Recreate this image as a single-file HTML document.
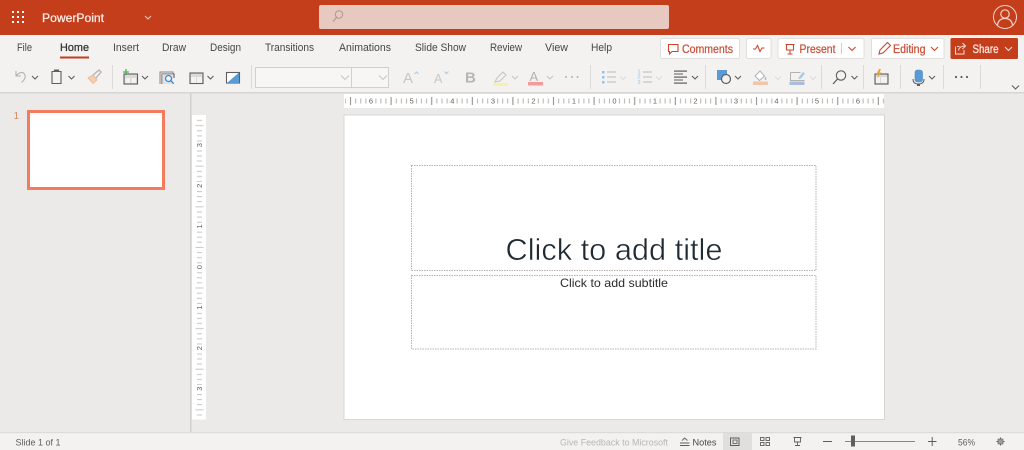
<!DOCTYPE html>
<html><head><meta charset="utf-8"><style>
html,body{margin:0;padding:0;width:1024px;height:450px;overflow:hidden;background:#ebeae9}
svg{display:block;filter:blur(.3px)}
text{font-family:"Liberation Sans",sans-serif}
.t{font-size:11px;fill:#484644}
.i{fill:none;stroke:#605e5c;stroke-width:1}
.d{fill:none;stroke:#c8c6c4;stroke-width:1}
.c{fill:none;stroke:#605e5c;stroke-width:1.1}
.cl{fill:none;stroke:#c8c6c4;stroke-width:1.1}
.r{fill:none;stroke:#d2442a;stroke-width:1.1}
.b{font-size:11.500px;fill:#c8503a;stroke:#c8503a;stroke-width:.25}
</style></head><body>
<svg width="1024" height="450" viewBox="0 0 1024 450" xmlns="http://www.w3.org/2000/svg">
<defs>
<pattern id="hr" x="370.4" y="94" width="40.6" height="14" patternUnits="userSpaceOnUse">
<g fill="#b4b2b0"><rect x="5" y="4.500" width="1" height="5"/><rect x="10" y="4.500" width="1" height="5"/><rect x="15" y="4.500" width="1" height="5"/><rect x="20.2" y="3" width="1" height="8" fill="#8a8886"/><rect x="25.4" y="4.500" width="1" height="5"/><rect x="30.5" y="4.500" width="1" height="5"/><rect x="35.6" y="4.500" width="1" height="5"/></g>
</pattern>
<pattern id="vr" x="192" y="104.9" width="14" height="40.6" patternUnits="userSpaceOnUse">
<g fill="#c8c6c4"><rect x="5" y="5" width="5" height="1"/><rect x="5" y="10" width="5" height="1"/><rect x="5" y="15" width="5" height="1"/><rect x="3.500" y="20.2" width="8" height="1"/><rect x="5" y="25.4" width="5" height="1"/><rect x="5" y="30.5" width="5" height="1"/><rect x="5" y="35.6" width="5" height="1"/></g>
</pattern>
</defs>

<!-- background -->
<rect width="1024" height="450" fill="#ebeae9"/>

<!-- title bar -->
<rect width="1024" height="35" fill="#c43e1c"/>
<g fill="#fff">
<rect x="12" y="11" width="2" height="2"/><rect x="17" y="11" width="2" height="2"/><rect x="22" y="11" width="2" height="2"/>
<rect x="12" y="16" width="2" height="2"/><rect x="17" y="16" width="2" height="2"/><rect x="22" y="16" width="2" height="2"/>
<rect x="12" y="21" width="2" height="2"/><rect x="17" y="21" width="2" height="2"/><rect x="22" y="21" width="2" height="2"/>
</g>
<text x="42" y="22" font-size="11.500" fill="#fbe9e3" stroke="#fbe9e3" stroke-width=".3" textLength="62" lengthAdjust="spacingAndGlyphs">PowerPoint</text>
<path d="M145 16l3 3 3-3" fill="none" stroke="#f2cbbf" stroke-width="1.1"/>
<rect x="319" y="5" width="350" height="24" rx="2" fill="#e8c9bf"/>
<circle cx="339" cy="14.500" r="3.700" fill="none" stroke="#a99a95" stroke-width="1"/>
<path d="M336.500 17.500l-3.500 4" stroke="#a99a95" stroke-width="1.1"/>
<circle cx="1005" cy="17" r="11.500" fill="none" stroke="#f2d5cb" stroke-width="1"/>
<circle cx="1005" cy="14" r="4.200" fill="none" stroke="#f2d5cb" stroke-width="1.200"/>
<path d="M997.500 25c.7-4.500 3.500-6.500 7.500-6.500s6.800 2 7.500 6.500" fill="none" stroke="#f2d5cb" stroke-width="1.200"/>

<!-- ribbon -->
<rect y="35" width="1024" height="58" fill="#f3f2f1"/>
<rect y="92" width="1024" height="1.500" fill="#d8d6d4"/>
<text class="t" x="17" y="51" textLength="15" lengthAdjust="spacingAndGlyphs">File</text>
<text class="t" x="60" y="51" textLength="29" lengthAdjust="spacingAndGlyphs" style="fill:#323130;stroke:#323130;stroke-width:.25">Home</text>
<rect x="60" y="56.500" width="29" height="2" fill="#c43e1c"/>
<text class="t" x="113" y="51" textLength="26" lengthAdjust="spacingAndGlyphs">Insert</text>
<text class="t" x="162" y="51" textLength="24" lengthAdjust="spacingAndGlyphs">Draw</text>
<text class="t" x="210" y="51" textLength="31" lengthAdjust="spacingAndGlyphs">Design</text>
<text class="t" x="265" y="51" textLength="49" lengthAdjust="spacingAndGlyphs">Transitions</text>
<text class="t" x="339" y="51" textLength="52" lengthAdjust="spacingAndGlyphs">Animations</text>
<text class="t" x="415" y="51" textLength="51" lengthAdjust="spacingAndGlyphs">Slide Show</text>
<text class="t" x="490" y="51" textLength="32" lengthAdjust="spacingAndGlyphs">Review</text>
<text class="t" x="545" y="51" textLength="23" lengthAdjust="spacingAndGlyphs">View</text>
<text class="t" x="591" y="51" textLength="21" lengthAdjust="spacingAndGlyphs">Help</text>

<!-- action buttons -->
<g fill="#fff" stroke="#e1dfdd">
<rect x="660.500" y="38.500" width="79" height="20" rx="1.500"/>
<rect x="746.500" y="38.500" width="24.500" height="20" rx="1.500"/>
<rect x="778" y="38.500" width="86" height="20" rx="1.500"/>
<rect x="871.500" y="38.500" width="72.500" height="20" rx="1.500"/>
</g>
<rect x="950.500" y="38" width="67.500" height="21" rx="1.500" fill="#c43e1c"/>
<path class="r" d="M668.500 44.500h9.500v7h-6l-2.500 2.500v-2.500h-1z"/>
<text class="b" x="682" y="53" textLength="51" lengthAdjust="spacingAndGlyphs">Comments</text>
<path class="r" d="M753 49h2.500l2-3.500 2.500 6 2-3.500h2.500"/>
<path class="r" d="M785.500 44.500h9M786.500 44.500v5.500h7v-5.500M790 50v3.500M787.500 54h5"/>
<text class="b" x="799.500" y="53" textLength="36" lengthAdjust="spacingAndGlyphs">Present</text>
<rect x="841" y="43" width="1" height="11" fill="#d2d0ce"/>
<path class="r" d="M848.500 47l3.500 3.500 3.500-3.500"/>
<path class="r" d="M879 54l1-4 7.500-7.500 3 3-7.500 7.500z" stroke-width="1.300"/>
<text class="b" x="893" y="53" textLength="32.500" lengthAdjust="spacingAndGlyphs">Editing</text>
<path class="r" d="M931 47l3.500 3.500 3.500-3.500"/>
<path d="M957 46.500h2.500M964 50v4h-8.500v-7.500M958.500 50.500c.5-3 2.500-4.500 6.500-4.500M962.500 43l3 3-3 3" fill="none" stroke="#f6dcd3" stroke-width="1"/>
<text x="972.500" y="53" font-size="11.500" fill="#fbe6df" stroke="#fbe6df" stroke-width=".3" textLength="26" lengthAdjust="spacingAndGlyphs">Share</text>
<path d="M1005 47l3.500 3.500 3.500-3.500" fill="none" stroke="#f6dcd3" stroke-width="1.100"/>

<!-- toolbar separators -->
<g fill="#dcdad8">
<rect x="112" y="65" width="1" height="24"/>
<rect x="251" y="65" width="1" height="24"/>
<rect x="590" y="65" width="1" height="24"/>
<rect x="705" y="65" width="1" height="24"/>
<rect x="821" y="65" width="1" height="24"/>
<rect x="863" y="65" width="1" height="24"/>
<rect x="900" y="65" width="1" height="24"/>
<rect x="943" y="65" width="1" height="24"/>
<rect x="980" y="65" width="1" height="24"/>
</g>

<!-- undo -->
<path d="M16 71v5h5M16 76c3-3.500 6-4.500 8-2.500 2.500 2.500 1 6-2.500 9" fill="none" stroke="#b4b2b0" stroke-width="1.100"/>
<path class="c" d="M32 76l3 3 3-3"/>
<!-- paste -->
<path d="M52 71.500h2.500v-1.500h4v1.500h2.500v12h-9z" fill="none" stroke="#605e5c" stroke-width="1.100"/>
<rect x="54.500" y="70" width="4" height="2" fill="#605e5c"/>
<path class="c" d="M68.500 76l3 3 3-3"/>
<!-- format painter -->
<path d="M88 78l5-3 4 5-4 3.500z" fill="#f3cfb4" stroke="#e8b48d" stroke-width=".8"/>
<path d="M93 75l6-5 2 2-5 6" fill="none" stroke="#b4b2b0" stroke-width="1.300"/>

<!-- new slide -->
<rect x="124" y="74" width="13.500" height="10" fill="#dcdad8" stroke="#605e5c" stroke-width="1.100"/>
<rect x="125.500" y="78" width="4.500" height="5" fill="#f3f2f1"/><rect x="131.500" y="78" width="4.500" height="5" fill="#f3f2f1"/>
<path d="M126 69v6M123 72h6" stroke="#4caf50" stroke-width="1.300"/>
<path class="c" d="M142 76l3 3 3-3"/>
<!-- find slide -->
<path d="M160 84v-12h13v2" fill="none" stroke="#8a8886" stroke-width="1"/>
<path d="M162 84v-10h12v4" fill="none" stroke="#605e5c" stroke-width="1.100"/>
<rect x="162" y="74" width="11" height="10" fill="#d8d6d4" opacity=".6"/>
<circle cx="168.500" cy="78.500" r="3" fill="#f3f2f1" stroke="#2b88d8" stroke-width="1.200"/>
<path d="M170.700 80.700l3 3" stroke="#2b88d8" stroke-width="1.300"/>
<!-- layout -->
<rect x="190" y="73" width="13" height="10.500" fill="#dcdad8" stroke="#605e5c" stroke-width="1.100"/>
<rect x="191" y="77" width="5" height="6" fill="#f3f2f1"/><rect x="197" y="77" width="5" height="6" fill="#f3f2f1"/>
<path class="c" d="M207.500 76l3 3 3-3"/>
<!-- background -->
<rect x="226.500" y="72.500" width="13" height="10.500" fill="#fff" stroke="#605e5c" stroke-width="1.100"/>
<path d="M227 83l12-10.500v10.500z" fill="#5b9bd5"/>

<!-- font boxes -->
<rect x="255.500" y="67.500" width="96" height="20" fill="#f7f6f5" stroke="#d2d0ce"/>
<path class="cl" d="M341 75.500l4 4 4-4"/>
<rect x="351.500" y="67.500" width="37" height="20" fill="#f7f6f5" stroke="#d2d0ce"/>
<path class="cl" d="M379 75.500l4 4 4-4"/>

<!-- font size -->
<text x="403" y="83" font-size="15" fill="#c8c6c4">A</text>
<path d="M414.500 74l2-2 2 2" fill="none" stroke="#a6cbe8"/>
<text x="434" y="83" font-size="12.500" fill="#c8c6c4">A</text>
<path d="M444.500 71.500l2 2 2-2" fill="none" stroke="#a6cbe8"/>
<text x="465" y="82.500" font-size="15" font-weight="bold" fill="#b8b6b4">B</text>
<!-- highlight -->
<path d="M495 82l2-4 6-6 3 3-6 6z" fill="none" stroke="#c8c6c4" stroke-width="1.100"/>
<rect x="493" y="83" width="15" height="3" fill="#f7f3a0"/>
<path class="cl" d="M512 76l3 3 3-3"/>
<!-- font colour -->
<text x="529.500" y="81" font-size="13" fill="#b4b2b0">A</text>
<rect x="528" y="82" width="15" height="3.500" fill="#f59a9a"/>
<path class="cl" d="M547 76l3 3 3-3"/>
<g fill="#b4b2b0"><circle cx="566" cy="77" r="1"/><circle cx="572" cy="77" r="1"/><circle cx="577.500" cy="77" r="1"/></g>

<!-- bullets -->
<g fill="#90c4ec"><rect x="602" y="71" width="2.500" height="2.500"/><rect x="602" y="76" width="2.500" height="2.500"/><rect x="602" y="81" width="2.500" height="2.500"/></g>
<g fill="#bdbbb9"><rect x="607" y="71.500" width="9" height="1"/><rect x="607" y="76.500" width="9" height="1"/><rect x="607" y="81.500" width="9" height="1"/></g>
<path d="M620 76.500l3 3 3-3" fill="none" stroke="#dcdad8"/>
<text x="637.500" y="73.500" font-size="5.500" fill="#90c4ec">1</text><text x="637.500" y="78.500" font-size="5.500" fill="#90c4ec">2</text><text x="637.500" y="84" font-size="5.500" fill="#90c4ec">3</text>
<g fill="#bdbbb9"><rect x="643" y="71.500" width="9" height="1"/><rect x="643" y="76.500" width="9" height="1"/><rect x="643" y="81.500" width="9" height="1"/></g>
<path d="M656 76.500l3 3 3-3" fill="none" stroke="#dcdad8"/>
<!-- align -->
<g fill="#605e5c"><rect x="674" y="70.500" width="13" height="1.200"/><rect x="674" y="73.500" width="9" height="1"/><rect x="674" y="76.500" width="13" height="1.200"/><rect x="674" y="79.500" width="9" height="1"/><rect x="674" y="82.500" width="13" height="1.200"/></g>
<path class="c" d="M692 76l3 3 3-3"/>

<!-- shapes -->
<rect x="717" y="70" width="10" height="10" fill="#5b9bd5"/>
<circle cx="726" cy="79" r="4.500" fill="#f3f2f1" stroke="#605e5c" stroke-width="1.200"/>
<path class="c" d="M735 76l3 3 3-3"/>
<!-- fill -->
<path d="M755 76l5-5 4.500 5-5 4.500z" fill="#fff" stroke="#b4b2b0"/>
<path d="M765.500 77v3" stroke="#90c4ec" stroke-width="1.500"/>
<rect x="753" y="81.500" width="15" height="3.500" fill="#f2c4a8"/>
<path d="M775 76.500l3 3 3-3" fill="none" stroke="#dcdad8"/>
<!-- outline -->
<path d="M790.500 72.500h10M790.500 72.500v8h14" fill="none" stroke="#b4b2b0"/>
<path d="M798 79l1-2 4-5 2 1.500-4 5z" fill="#a6cbe8"/>
<rect x="789.500" y="81.500" width="15" height="3.500" fill="#a9bde0"/>
<path d="M810 76.500l3 3 3-3" fill="none" stroke="#dcdad8"/>

<!-- find -->
<circle cx="841" cy="75.500" r="4.700" fill="none" stroke="#605e5c" stroke-width="1.100"/>
<path d="M837.500 79l-4.500 5" stroke="#605e5c" stroke-width="1.300"/>
<path class="c" d="M851.500 76l3 3 3-3"/>
<!-- designer -->
<rect x="875" y="74" width="13" height="10" fill="#dcdad8" stroke="#605e5c" stroke-width="1.100"/>
<rect x="881" y="77" width="6" height="6" fill="#f3f2f1"/><rect x="876" y="77" width="4" height="6" fill="#f3f2f1"/>
<path d="M879 69l-2.500 5h2l-1.500 4.500 4.500-6h-2l1.500-3.500z" fill="#f0a030"/>
<!-- dictate -->
<rect x="915" y="70" width="7.500" height="12" rx="2.500" fill="#5b9bd5" stroke="#4a89c5" stroke-width=".6"/>
<path d="M913 79c0 3.500 2 5 5.500 5s5.500-1.500 5.500-5" fill="none" stroke="#605e5c"/>
<rect x="917" y="83.500" width="3" height="2.500" fill="#605e5c"/>
<path class="c" d="M929 76l3 3 3-3"/>
<g fill="#605e5c"><circle cx="956" cy="77" r="1.100"/><circle cx="961.500" cy="77" r="1.100"/><circle cx="967" cy="77" r="1.100"/></g>
<path class="c" d="M1012 85.500l3.500 3.500 3.500-3.500"/>

<!-- left pane -->
<rect x="190" y="93" width="1.500" height="339" fill="#d2d0ce"/>
<text x="13.500" y="119" font-size="10" fill="#d08a5e">1</text>
<rect x="28.500" y="111.500" width="135" height="77" fill="#fff" stroke="#f47b5e" stroke-width="3"/>

<!-- horizontal ruler -->
<rect x="344" y="94" width="540" height="14" fill="#fff"/>
<rect x="345" y="94" width="539" height="14" fill="url(#hr)"/>
<g fill="#fff"><rect x="367" y="97" width="7" height="8"/><rect x="408" y="97" width="7" height="8"/><rect x="449" y="97" width="7" height="8"/><rect x="489" y="97" width="7" height="8"/><rect x="530" y="97" width="7" height="8"/><rect x="570" y="97" width="7" height="8"/><rect x="611" y="97" width="7" height="8"/><rect x="651" y="97" width="7" height="8"/><rect x="692" y="97" width="7" height="8"/><rect x="733" y="97" width="7" height="8"/><rect x="773" y="97" width="7" height="8"/><rect x="814" y="97" width="7" height="8"/><rect x="855" y="97" width="7" height="8"/></g>
<g font-size="7.500" fill="#605e5c" text-anchor="middle">
<text x="371" y="103.500">6</text><text x="411.700" y="103.500">5</text><text x="452.300" y="103.500">4</text><text x="492.900" y="103.500">3</text><text x="533.500" y="103.500">2</text><text x="574" y="103.500">1</text><text x="614.500" y="103.500">0</text><text x="655" y="103.500">1</text><text x="695.500" y="103.500">2</text><text x="736" y="103.500">3</text><text x="776.500" y="103.500">4</text><text x="817" y="103.500">5</text><text x="858" y="103.500">6</text>
</g>

<!-- vertical ruler -->
<rect x="192" y="115" width="14" height="304.500" fill="#fff"/>
<rect x="193" y="117" width="13" height="301" fill="url(#vr)"/>
<g fill="#fff"><rect x="195" y="142" width="8" height="7"/><rect x="195" y="182" width="8" height="7"/><rect x="195" y="223" width="8" height="7"/><rect x="195" y="264" width="8" height="7"/><rect x="195" y="304" width="8" height="7"/><rect x="195" y="345" width="8" height="7"/><rect x="195" y="385" width="8" height="7"/></g>
<g font-size="7.500" fill="#605e5c" text-anchor="middle">
<text transform="translate(202,145.200) rotate(-90)">3</text>
<text transform="translate(202,185.800) rotate(-90)">2</text>
<text transform="translate(202,226.400) rotate(-90)">1</text>
<text transform="translate(202,267.200) rotate(-90)">0</text>
<text transform="translate(202,307.600) rotate(-90)">1</text>
<text transform="translate(202,348.200) rotate(-90)">2</text>
<text transform="translate(202,388.800) rotate(-90)">3</text>
</g>

<!-- slide -->
<rect x="344" y="115" width="540.500" height="304.500" fill="#fff" stroke="#d8d6d4" stroke-width="1"/>
<rect x="411.500" y="165.500" width="404.500" height="105" fill="none" stroke="#b4b2b0" stroke-dasharray="1.500 1"/>
<rect x="411.500" y="275.500" width="404.500" height="73.500" fill="none" stroke="#b4b2b0" stroke-dasharray="1.500 1"/>
<text x="505.500" y="260" font-size="31" fill="#1f2a33" stroke="#fff" stroke-width=".5" textLength="217" lengthAdjust="spacingAndGlyphs">Click to add title</text>
<text x="560" y="287" font-size="12" fill="#2b2b2b" textLength="108" lengthAdjust="spacingAndGlyphs">Click to add subtitle</text>

<!-- status bar -->
<rect y="432" width="1024" height="18" fill="#f3f2f1"/>
<rect y="432" width="1024" height="1.200" fill="#dddbd9"/>
<text x="15.500" y="445.500" font-size="9.500" fill="#605e5c" textLength="45" lengthAdjust="spacingAndGlyphs">Slide 1 of 1</text>
<text x="560" y="445.500" font-size="9.500" fill="#b8b6b4" textLength="108" lengthAdjust="spacingAndGlyphs">Give Feedback to Microsoft</text>
<path d="M680 443h9.500M680 445.500h9.500M682 440.500l2.700-2.500 2.700 2.500" fill="none" stroke="#605e5c" stroke-width=".9"/>
<text x="692.500" y="445.500" font-size="9.500" fill="#484644" textLength="24" lengthAdjust="spacingAndGlyphs">Notes</text>
<rect x="723" y="433" width="29" height="17" fill="#e1dfdd"/>
<rect x="730.500" y="438" width="8.500" height="7.500" fill="none" stroke="#605e5c"/>
<rect x="733" y="440" width="4" height="3.500" fill="none" stroke="#605e5c" stroke-width=".8"/>
<g fill="none" stroke="#605e5c" stroke-width=".9"><rect x="760.500" y="437.500" width="3.500" height="3"/><rect x="766" y="437.500" width="3.500" height="3"/><rect x="760.500" y="442.500" width="3.500" height="3"/><rect x="766" y="442.500" width="3.500" height="3"/></g>
<path d="M793.500 437.500h8M794.500 437.500v4.500h6v-4.500M797.500 442v3.500M795 445.500h5" fill="none" stroke="#605e5c" stroke-width=".9"/>
<rect x="823" y="441" width="9" height="1" fill="#605e5c"/>
<rect x="845" y="441" width="70" height="1" fill="#8a8886"/>
<rect x="851" y="435.500" width="4" height="11" fill="#605e5c"/>
<path d="M928 441.500h8.500M932.200 437v9" stroke="#605e5c" stroke-width="1"/>
<text x="958" y="445.500" font-size="9.500" fill="#605e5c" textLength="17" lengthAdjust="spacingAndGlyphs">56%</text>
<path d="M1000.500 437.500v8M996.500 441.500h8" stroke="#605e5c" stroke-width="1"/>
<rect x="998" y="439" width="5" height="5" fill="#a19f9d" stroke="#605e5c" stroke-width=".6"/>
</svg>
</body></html>
